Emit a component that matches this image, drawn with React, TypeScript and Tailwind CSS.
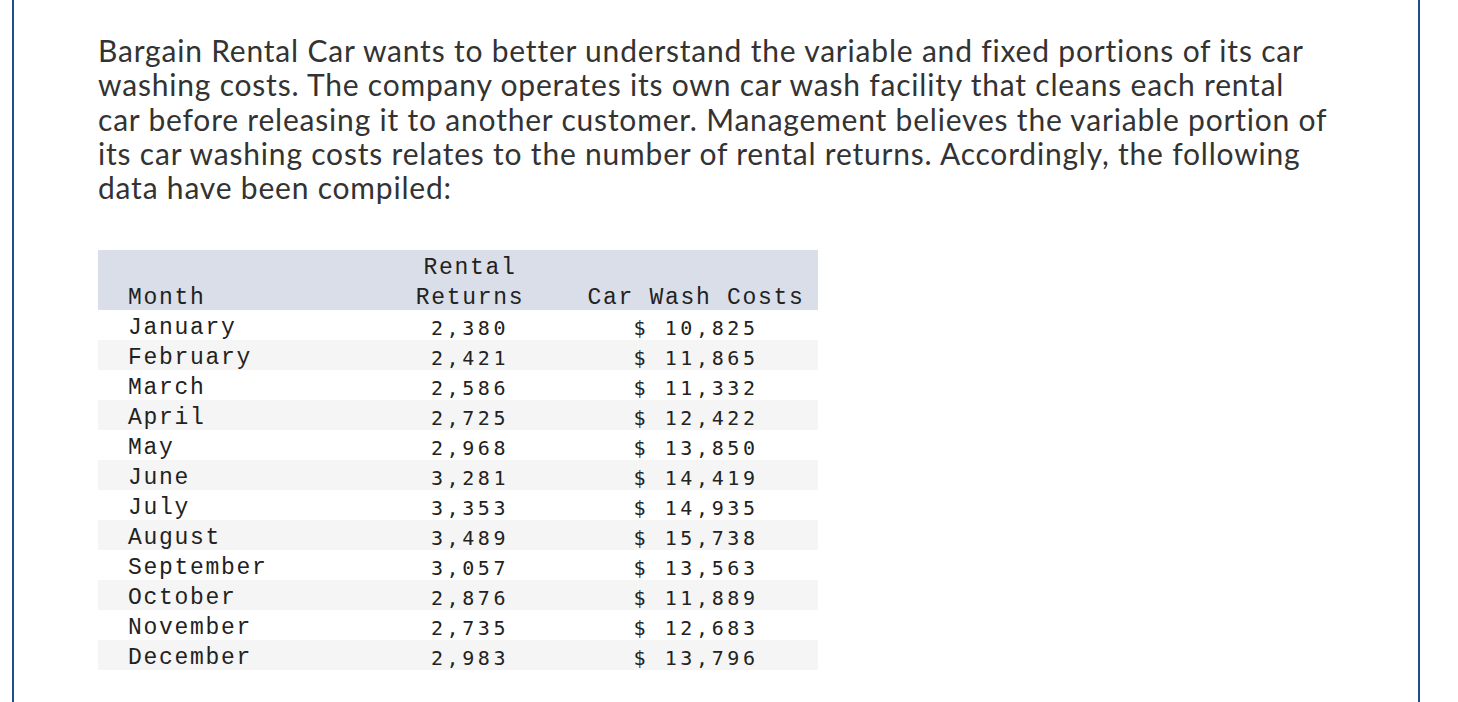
const rows = [
  ["January", "2,380", "$ 10,825"],
  ["February", "2,421", "$ 11,865"],
  ["March", "2,586", "$ 11,332"],
  ["April", "2,725", "$ 12,422"],
  ["May", "2,968", "$ 13,850"],
  ["June", "3,281", "$ 14,419"],
  ["July", "3,353", "$ 14,935"],
  ["August", "3,489", "$ 15,738"],
  ["September", "3,057", "$ 13,563"],
  ["October", "2,876", "$ 11,889"],
  ["November", "2,735", "$ 12,683"],
  ["December", "2,983", "$ 13,796"],
];

const serifMono = "font-['Liberation_Mono',monospace] text-[23px] tracking-[1.7px]";
const sansMono = "font-['DejaVu_Sans_Mono',monospace] text-[20px] tracking-[3.6px]";

export default function App() {
  return (
    <div className="bg-white min-h-[702px]">
      <div className="ml-[12px] w-[1408px] min-h-[702px] border-x-2 border-[#1d4f8e] pl-[84px] pt-[33px]">
        <p className="font-['Lato',sans-serif] text-[30px] leading-[34.25px] tracking-[0.8px] text-[#333] whitespace-nowrap">
          Bargain Rental Car wants to better understand the variable and fixed portions of its car
          <br />
          washing costs. The company operates its own car wash facility that cleans each rental
          <br />
          car before releasing it to another customer. Management believes the variable portion of
          <br />
          its car washing costs relates to the number of rental returns. Accordingly, the following
          <br />
          data have been compiled:
        </p>

        <div className="mt-[46px] w-[720px] text-[#222]">
          <div className="grid grid-cols-[300px_144px_276px] bg-[#d9dee8] leading-[30px] pt-[3px] h-[60px]">
            <div className={`${serifMono} pl-[30px] pt-[30px]`}>Month</div>
            <div className={`${serifMono} text-center`}>
              Rental
              <br />
              Returns
            </div>
            <div className={`${serifMono} text-center pl-[32px] pt-[30px]`}>Car Wash Costs</div>
          </div>
          {rows.map((r, i) => (
            <div
              key={r[0]}
              className={`grid grid-cols-[300px_144px_276px] h-[30px] leading-[30px] pt-[3px] ${i % 2 === 1 ? "bg-[#f5f5f5]" : "bg-white"}`}
            >
              <div className={`${serifMono} pl-[30px]`}>{r[0]}</div>
              <div className={`${sansMono} text-center`}>{r[1]}</div>
              <div className={`${sansMono} text-center pl-[32px]`}>{r[2]}</div>
            </div>
          ))}
        </div>
      </div>
    </div>
  );
}
